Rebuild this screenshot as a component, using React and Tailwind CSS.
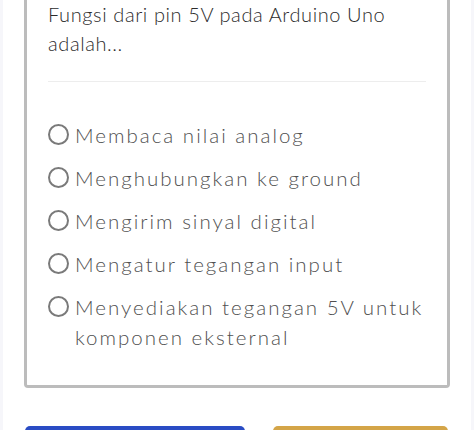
import { useState } from 'react'

const options = [
  'Membaca nilai analog',
  'Menghubungkan ke ground',
  'Mengirim sinyal digital',
  'Mengatur tegangan input',
  'Menyediakan tegangan 5V untuk komponen eksternal',
]

export default function App() {
  const [picked, setPicked] = useState(null)

  return (
    <div className="h-[430px] overflow-hidden bg-[#f6f6fa] font-['Lato',sans-serif]">
      <div className="mx-[3px] h-full bg-white pr-[13px]">
        <div className="ml-[21px] w-[426px] rounded-b-[4px] border-[3px] border-t-0 border-[#bcbcbc] px-[21px] pb-[33px]">
          <p className="text-[20px] font-light leading-[29px] tracking-[0.6px] text-[#2b2b2b]">
            Fungsi dari pin 5V pada Arduino Uno adalah...
          </p>
          <div className="mt-[23px] h-px bg-[#ededed]" />
          <ul className="mt-[38px] flex flex-col gap-[13px]">
            {options.map((o, i) => (
              <li key={o}>
                <label className="flex cursor-pointer items-start gap-[6px]" onClick={() => setPicked(i)}>
                  <span className="mt-[4px] flex h-[21px] w-[21px] shrink-0 items-center justify-center rounded-full border-2 border-[#7a7a7a]">
                    {picked === i && <span className="h-[11px] w-[11px] rounded-full bg-[#555]" />}
                  </span>
                  <span className="text-[20.5px] font-light leading-[30px] tracking-[2px] text-[#505050]">{o}</span>
                </label>
              </li>
            ))}
          </ul>
        </div>
        <div className="mt-[38px] flex gap-[28px] pl-[22px]">
          <button className="h-[20px] w-[220px] rounded-t-[5px] bg-[#2a4cc4]" />
          <button className="h-[20px] w-[175px] rounded-t-[5px] bg-[#d4a548]" />
        </div>
      </div>
    </div>
  )
}
